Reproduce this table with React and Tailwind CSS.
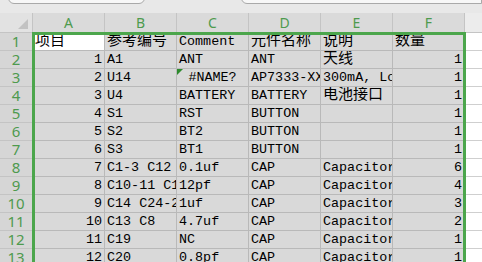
import React from 'react';

const COLS = ['A', 'B', 'C', 'D', 'E', 'F'];

// each row: [A, B, C, D, E, F]; numbers right-aligned like a sheet does
const ROWS = [
  ['项目', '参考编号', 'Comment', '元件名称', '说明', '数量'],
  [1, 'A1', 'ANT', 'ANT', '天线', 1],
  [2, 'U14', '#NAME?', 'AP7333-XX', '300mA, Low', 1],
  [3, 'U4', 'BATTERY', 'BATTERY', '电池接口', 1],
  [4, 'S1', 'RST', 'BUTTON', '', 1],
  [5, 'S2', 'BT2', 'BUTTON', '', 1],
  [6, 'S3', 'BT1', 'BUTTON', '', 1],
  [7, 'C1-3 C12', '0.1uf', 'CAP', 'Capacitor', 6],
  [8, 'C10-11 C15', '12pf', 'CAP', 'Capacitor', 4],
  [9, 'C14 C24-25', '1uf', 'CAP', 'Capacitor', 3],
  [10, 'C13 C8', '4.7uf', 'CAP', 'Capacitor', 2],
  [11, 'C19', 'NC', 'CAP', 'Capacitor', 1],
  [12, 'C20', '0.8pf', 'CAP', 'Capacitor', 1],
];

const hasCjk = (s) => /[\u4e00-\u9fff]/.test(String(s));

const Cell = ({ value, active, error }) => {
  const isNum = typeof value === 'number';
  const isErr = String(value).startsWith('#');
  return (
    <div
      className={`relative h-[18px] border-r border-b border-[#b9b9b9] px-[2px] overflow-hidden whitespace-nowrap leading-[17px] text-black ${
        active ? 'bg-white' : 'bg-[#d9d9d9]'
      } ${isNum ? 'text-right' : isErr ? 'text-center' : 'text-left'} ${
        hasCjk(value) ? 'text-[15px]' : 'text-[13.4px]'
      }`}
    >
      {error && (
        <span className="absolute left-0 top-0 w-0 h-0 border-t-[6px] border-r-[6px] border-t-[#2e8b2e] border-r-transparent" />
      )}
      {value}
    </div>
  );
};

export default function App() {
  return (
    <div
      className="relative w-[482px] h-[262px] overflow-hidden bg-[#e8e8e8]"
      style={{ fontFamily: '"Liberation Mono", "Noto Sans CJK SC", monospace' }}
    >
      {/* formula bar, only its bottom edge shows */}
      <div className="flex h-[13px] overflow-hidden">
        <div className="ml-[8px] -mt-[12px] h-[16px] w-[148px] rounded-b-[6px] border border-[#a9a9a9] bg-[#f7f7f7]" />
        <div className="ml-[96px] -mt-[12px] h-[16px] w-[260px] rounded-bl-[6px] border border-[#a9a9a9] bg-[#f7f7f7]" />
      </div>

      <div className="grid grid-cols-[33px_repeat(6,72px)_1fr]">
        {/* header row */}
        <div className="relative h-[20px] border-r border-b border-[#c4c4c4] bg-[#e2e2e2]">
          <span className="absolute right-[4px] bottom-[3px] w-0 h-0 border-b-[10px] border-l-[10px] border-b-[#c2c2c2] border-l-transparent" />
        </div>
        {COLS.map((c) => (
          <div
            key={c}
            className="h-[20px] border-r border-b border-[#c4c4c4] bg-[#dadada] text-center leading-[20px] text-[14px] text-[#4e9a4e]"
            style={{ fontFamily: '"Noto Sans", "Liberation Sans", sans-serif' }}
          >
            {c}
          </div>
        ))}
        <div className="h-[20px] border-b border-[#c4c4c4] bg-[#ececec]" />

        {ROWS.map((row, r) => (
          <React.Fragment key={r}>
            <div
              className="h-[18px] border-r border-b border-[#c4c4c4] bg-[#d6d6d6] text-center leading-[17px] text-[15px] text-[#4e9a4e]"
              style={{ fontFamily: '"Noto Sans", "Liberation Sans", sans-serif' }}
            >
              {r + 1}
            </div>
            {row.map((v, c) => (
              <Cell key={c} value={v} active={r === 0 && c === 0} error={r === 2 && c === 2} />
            ))}
            <div className="h-[18px] border-b border-[#cfcfcf] bg-white" />
          </React.Fragment>
        ))}
      </div>

      {/* selection outline A1:F... */}
      <div className="absolute left-[32px] top-[32px] w-[434px] h-[240px] border-[3px] border-[#4ca64c] pointer-events-none" />
    </div>
  );
}
